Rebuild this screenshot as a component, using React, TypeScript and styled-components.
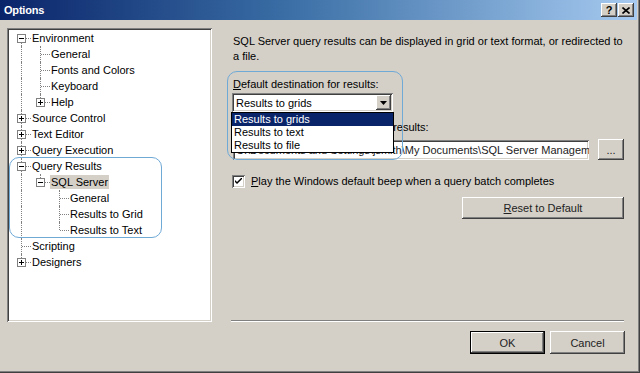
import React from 'react';
import styled, { createGlobalStyle, css } from 'styled-components';

const FONT = `"Liberation Sans", Arial, sans-serif`;

const Global = createGlobalStyle`
  html, body { margin: 0; padding: 0; background: #d4d0c8; }
  body { width: 640px; height: 373px; overflow: hidden; font-family: ${FONT}; font-size: 11px; color: #000; }
  * { box-sizing: border-box; }
`;

const Window = styled.div`
  width: 640px;
  height: 373px;
  background: #d4d0c8;
  display: flex;
  flex-direction: column;
  padding: 0 3px 3px 0;
  box-shadow: inset -1px -1px #404040, inset -2px -2px #808080;
`;

const TitleBar = styled.div`
  height: 20px;
  flex: none;
  display: flex;
  align-items: center;
  padding: 0 3px 0 4px;
  background: linear-gradient(to right, #0a246a 0%, #3a6ea5 45%, #a6caf0 100%);
`;

const Title = styled.span`
  font: bold 11px ${FONT};
  color: #fff;
  letter-spacing: -0.2px;
`;

const TitleButtons = styled.div`
  margin-left: auto;
  display: flex;
  gap: 1px;
`;

const TitleButton = styled.span`
  width: 16px;
  height: 14px;
  background: #d4d0c8;
  display: flex;
  align-items: center;
  justify-content: center;
  font: bold 11px ${FONT};
  color: #000;
  box-shadow: inset -1px -1px #404040, inset 1px 1px #fff, inset -2px -2px #808080;
`;

const Main = styled.div`
  flex: none;
  display: flex;
  padding: 8px 0 0 7px;
  gap: 19px;
  height: 302px;
`;

const TreePanel = styled.div`
  position: relative;
  width: 205px;
  height: 294px;
  background: #fff;
  padding: 2px 2px 2px 5px;
  box-shadow: inset 1px 1px #808080, inset -1px -1px #fff, inset 2px 2px #404040, inset -2px -2px #d4d0c8;
`;

const TreeRow = styled.div`
  display: flex;
  height: 16px;
  align-items: flex-start;
`;

type Guide = 'none' | 'full' | 'top' | 'bottom';

const GuideCell = styled.span<{ $v: Guide; $h: boolean }>`
  position: relative;
  flex: none;
  width: 19px;
  height: 16px;
  &::before {
    content: '';
    position: absolute;
    left: 9px;
    top: ${(p) => (p.$v === 'bottom' ? '8px' : '0')};
    height: ${(p) => (p.$v === 'full' ? '16px' : '8px')};
    border-left: 1px dotted #808080;
    display: ${(p) => (p.$v === 'none' ? 'none' : 'block')};
  }
  &::after {
    content: '';
    position: absolute;
    left: 10px;
    top: 8px;
    width: 9px;
    border-top: 1px dotted #808080;
    display: ${(p) => (p.$h ? 'block' : 'none')};
  }
`;

const ExpandBox = styled.span<{ $open: boolean }>`
  position: absolute;
  left: 5px;
  top: 4px;
  width: 9px;
  height: 9px;
  border: 1px solid #808080;
  background: #fff;
  z-index: 1;
  &::before {
    content: '';
    position: absolute;
    left: 1px;
    top: 3px;
    width: 5px;
    height: 1px;
    background: #000;
  }
  &::after {
    content: '';
    position: absolute;
    left: 3px;
    top: 1px;
    width: 1px;
    height: 5px;
    background: #000;
    display: ${(p) => (p.$open ? 'none' : 'block')};
  }
`;

const TreeLabel = styled.span<{ $selected?: boolean }>`
  margin-top: 1px;
  padding: 0 1px;
  line-height: 14px;
  height: 14px;
  white-space: nowrap;
  background: ${(p) => (p.$selected ? '#d4d0c8' : 'transparent')};
`;

const Highlight = styled.div<{ $l: number; $t: number; $w: number; $h: number }>`
  position: absolute;
  left: ${(p) => p.$l}px;
  top: ${(p) => p.$t}px;
  width: ${(p) => p.$w}px;
  height: ${(p) => p.$h}px;
  border: 1.5px solid #6fa9d6;
  border-radius: 10px;
  pointer-events: none;
  z-index: 5;
`;

const RightColumn = styled.div`
  position: relative;
  width: 393px;
  height: 294px;
  display: flex;
  flex-direction: column;
  padding-left: 2px;
`;

const Description = styled.p`
  margin: 6px 0 0 0;
  line-height: 15px;
  width: 392px;
`;

const FieldLabel = styled.div<{ $mt: number }>`
  margin-top: ${(p) => p.$mt}px;
  line-height: 14px;
  white-space: nowrap;
`;

const ComboWrap = styled.div`
  position: relative;
  margin-top: 2px;
  margin-left: -1px;
  width: 161px;
  height: 19px;
  z-index: 3;
`;

const Sunken = css`
  background: #fff;
  box-shadow: inset 1px 1px #808080, inset -1px -1px #fff, inset 2px 2px #404040, inset -2px -2px #d4d0c8;
`;

const Combo = styled.div`
  ${Sunken};
  height: 19px;
  display: flex;
  align-items: center;
  padding: 2px 2px 2px 4px;
`;

const ComboText = styled.span`
  flex: 1;
  white-space: nowrap;
`;

const ArrowButton = styled.span`
  width: 15px;
  height: 15px;
  background: #d4d0c8;
  display: flex;
  align-items: center;
  justify-content: center;
  box-shadow: inset -1px -1px #404040, inset 1px 1px #fff, inset -2px -2px #808080;
`;

const DropList = styled.ul`
  position: absolute;
  left: -1px;
  top: 19px;
  width: 163px;
  margin: 0;
  padding: 0;
  list-style: none;
  background: #fff;
  border: 1px solid #000;
`;

const DropItem = styled.li<{ $active?: boolean }>`
  height: 13px;
  line-height: 13px;
  padding-left: 2px;
  white-space: nowrap;
  background: ${(p) => (p.$active ? '#0a246a' : '#fff')};
  color: ${(p) => (p.$active ? '#fff' : '#000')};
`;

const PathRow = styled.div`
  margin-top: 5px;
  display: flex;
  align-items: center;
  gap: 9px;
  height: 21px;
`;

const TextField = styled.div`
  ${Sunken};
  flex: 1;
  height: 20px;
  padding: 3px 3px 0 3px;
  line-height: 14px;
  white-space: nowrap;
  overflow: hidden;
  color: #222;
`;

const Button = styled.button<{ $w: number; $h: number; $default?: boolean }>`
  flex: none;
  width: ${(p) => p.$w}px;
  height: ${(p) => p.$h}px;
  font: 11px ${FONT};
  color: #222;
  background: #d4d0c8;
  border: none;
  padding: 0;
  box-shadow: ${(p) =>
    p.$default
      ? 'inset 0 0 0 1px #000, inset -2px -2px #404040, inset 2px 2px #fff, inset -3px -3px #808080'
      : 'inset -1px -1px #404040, inset 1px 1px #fff, inset -2px -2px #808080'};
`;

const CheckRow = styled.label`
  margin-top: 14px;
  display: flex;
  align-items: center;
  gap: 6px;
  height: 14px;
  margin-left: -1px;
`;

const CheckBox = styled.span`
  ${Sunken};
  width: 13px;
  height: 13px;
  display: flex;
  align-items: center;
  justify-content: center;
`;

const ResetRow = styled.div`
  margin-top: 9px;
  display: flex;
  justify-content: flex-end;
`;

const Separator = styled.div`
  margin-top: auto;
  height: 2px;
  border-top: 1px solid #808080;
  border-bottom: 1px solid #fff;
  margin-left: -2px;
  margin-bottom: 0;
`;

const Footer = styled.div`
  display: flex;
  justify-content: flex-end;
  gap: 5px;
  padding: 9px 12px 0 0;
`;

type Node = { label: string; cells: { v: Guide; h: boolean; box?: '+' | '-' }[]; selected?: boolean };

const tree: Node[] = [
  { label: 'Environment', cells: [{ v: 'bottom', h: true, box: '-' }] },
  { label: 'General', cells: [{ v: 'full', h: false }, { v: 'full', h: true }] },
  { label: 'Fonts and Colors', cells: [{ v: 'full', h: false }, { v: 'full', h: true }] },
  { label: 'Keyboard', cells: [{ v: 'full', h: false }, { v: 'full', h: true }] },
  { label: 'Help', cells: [{ v: 'full', h: false }, { v: 'top', h: true, box: '+' }] },
  { label: 'Source Control', cells: [{ v: 'full', h: true, box: '+' }] },
  { label: 'Text Editor', cells: [{ v: 'full', h: true, box: '+' }] },
  { label: 'Query Execution', cells: [{ v: 'full', h: true, box: '+' }] },
  { label: 'Query Results', cells: [{ v: 'full', h: true, box: '-' }] },
  { label: 'SQL Server', selected: true, cells: [{ v: 'full', h: false }, { v: 'top', h: true, box: '-' }] },
  { label: 'General', cells: [{ v: 'full', h: false }, { v: 'none', h: false }, { v: 'full', h: true }] },
  { label: 'Results to Grid', cells: [{ v: 'full', h: false }, { v: 'none', h: false }, { v: 'full', h: true }] },
  { label: 'Results to Text', cells: [{ v: 'full', h: false }, { v: 'none', h: false }, { v: 'top', h: true }] },
  { label: 'Scripting', cells: [{ v: 'full', h: true }] },
  { label: 'Designers', cells: [{ v: 'top', h: true, box: '+' }] },
];

export default function App() {
  return (
    <>
      <Global />
      <Window>
        <TitleBar>
          <Title>Options</Title>
          <TitleButtons>
            <TitleButton>?</TitleButton>
            <TitleButton>
              <svg width="8" height="7" viewBox="0 0 8 7">
                <path d="M0.5 0.5 L7.5 6.5 M7.5 0.5 L0.5 6.5" stroke="#000" strokeWidth="1.6" fill="none" />
              </svg>
            </TitleButton>
          </TitleButtons>
        </TitleBar>
        <Main>
          <TreePanel>
            {tree.map((n, i) => (
              <TreeRow key={i}>
                {n.cells.map((c, j) => (
                  <GuideCell key={j} $v={c.v} $h={c.h}>
                    {c.box && <ExpandBox $open={c.box === '-'} />}
                  </GuideCell>
                ))}
                <TreeLabel $selected={n.selected}>{n.label}</TreeLabel>
              </TreeRow>
            ))}
            <Highlight $l={2} $t={129} $w={153} $h={81} />
          </TreePanel>
          <RightColumn>
            <Description>
              SQL Server query results can be displayed in grid or text format, or redirected to a file.
            </Description>
            <FieldLabel $mt={13}>
              <u>D</u>efault destination for results:
            </FieldLabel>
            <ComboWrap>
              <Combo>
                <ComboText>Results to grids</ComboText>
                <ArrowButton>
                  <svg width="7" height="4" viewBox="0 0 7 4">
                    <path d="M0 0 H7 L3.5 4 Z" fill="#000" />
                  </svg>
                </ArrowButton>
              </Combo>
              <DropList>
                <DropItem $active>Results to grids</DropItem>
                <DropItem>Results to text</DropItem>
                <DropItem>Results to file</DropItem>
              </DropList>
            </ComboWrap>
            <FieldLabel $mt={8}>Default location for saving query results:</FieldLabel>
            <PathRow>
              <TextField>C:\Documents and Settings\jsmith\My Documents\SQL Server Management Studio\Projects</TextField>
              <Button $w={26} $h={21}>...</Button>
            </PathRow>
            <CheckRow>
              <CheckBox>
                <svg width="7" height="7" viewBox="0 0 7 7">
                  <path d="M0 2 L2 4 L7 -1 V1 L2 6 L0 4 Z" fill="#000" />
                </svg>
              </CheckBox>
              <span>
                <u>P</u>lay the Windows default beep when a query batch completes
              </span>
            </CheckRow>
            <ResetRow>
              <Button $w={162} $h={22}>
                <u>R</u>eset to Default
              </Button>
            </ResetRow>
            <Separator />
            <Highlight $l={-4} $t={43} $w={176} $h={89} />
          </RightColumn>
        </Main>
        <Footer>
          <Button $w={75} $h={23} $default>OK</Button>
          <Button $w={75} $h={23}>Cancel</Button>
        </Footer>
      </Window>
    </>
  );
}
